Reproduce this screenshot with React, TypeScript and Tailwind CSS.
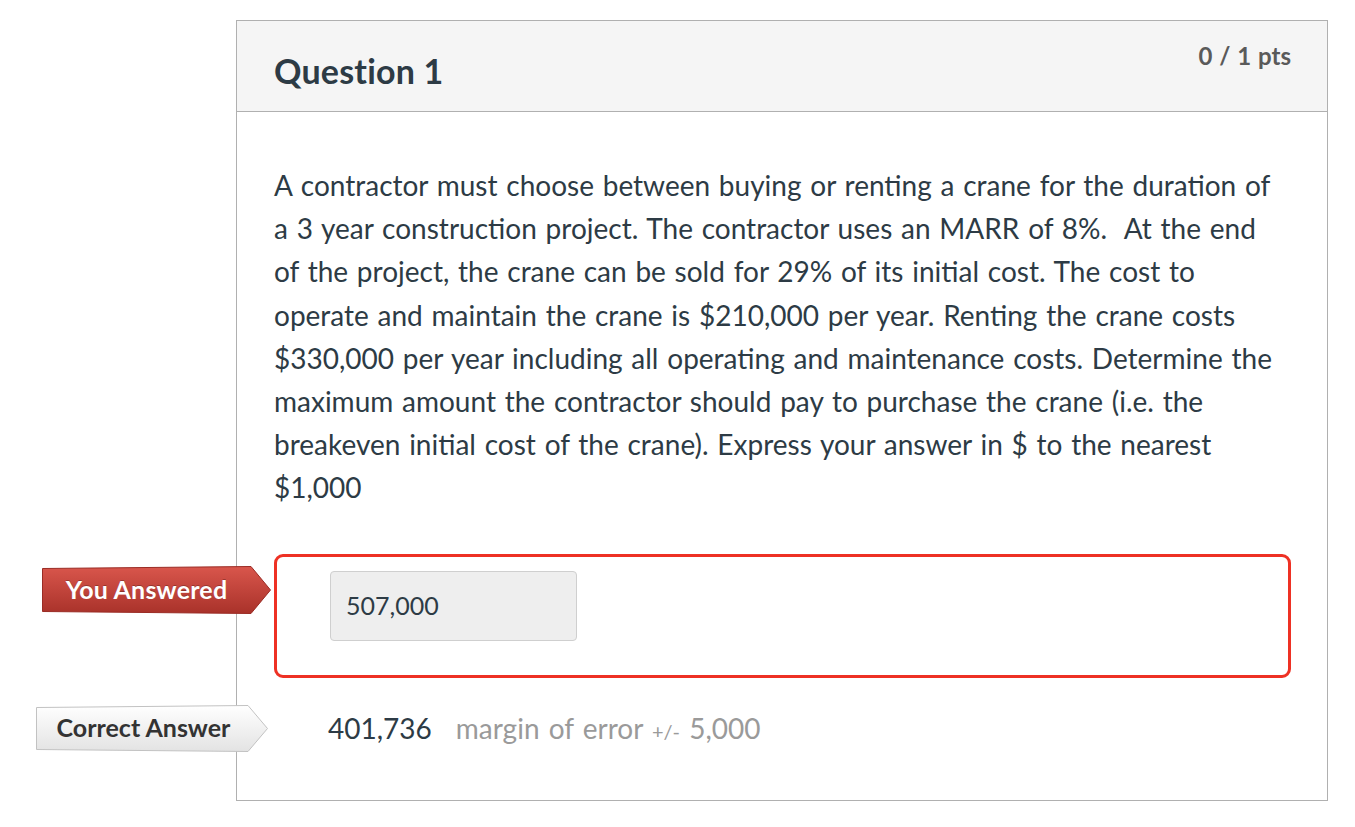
import React from "react";

function ArrowLabel({
  text,
  variant,
}: {
  text: string;
  variant: "red" | "gray";
}) {
  const red = variant === "red";
  const w = red ? 229 : 232;
  const h = red ? 48 : 47;
  const tip = 20;
  const id = red ? "gr" : "gg";
  return (
    <div className="relative" style={{ width: w, height: h }}>
      <svg width={w} height={h} className="absolute inset-0">
        <defs>
          <linearGradient id={id} x1="0" y1="0" x2="0" y2="1">
            {red ? (
              <>
                <stop offset="0" stopColor="#d9564c" />
                <stop offset="1" stopColor="#a9322a" />
              </>
            ) : (
              <>
                <stop offset="0" stopColor="#ffffff" />
                <stop offset="1" stopColor="#e3e3e3" />
              </>
            )}
          </linearGradient>
        </defs>
        <polygon
          points={`0.5,2.5 ${w - tip},0.5 ${w - 0.5},${h / 2} ${w - tip},${h - 0.5} 0.5,${h - 2.5}`}
          fill={`url(#${id})`}
          stroke={red ? "#9a2c25" : "#c2c2c2"}
          strokeWidth="1"
          strokeLinejoin="round"
        />
      </svg>
      <div
        className={`absolute inset-y-0 left-0 flex items-center justify-center font-bold text-[25px] ${
          red
            ? "text-white tracking-[0.2px] [text-shadow:0_-1px_0_rgba(0,0,0,0.25)]"
            : "text-[#333] tracking-[0px] pl-[3px]"
        }`}
        style={{ width: w - tip }}
      >
        {text}
      </div>
    </div>
  );
}

const lines = [
  "A contractor must choose between buying or renting a crane for the duration of",
  "a 3 year construction project. The contractor uses an MARR of 8%.\u00a0 At the end",
  "of the project, the crane can be sold for 29% of its initial cost. The cost to",
  "operate and maintain the crane is $210,000 per year. Renting the crane costs",
  "$330,000 per year including all operating and maintenance costs. Determine the",
  "maximum amount the contractor should pay to purchase the crane (i.e. the",
  "breakeven initial cost of the crane). Express your answer in $ to the nearest",
  "$1,000",
];

export default function App() {
  return (
    <div className="min-h-[827px] w-[1355px] bg-white font-['Lato','Noto_Sans',sans-serif] text-[#2d3b45] pt-[20px]">
      <div className="ml-[236px] w-[1092px] h-[781px] border border-[#b0b0b0] flex flex-col">
        <div className="h-[91px] shrink-0 bg-[#f5f5f5] border-b border-[#b0b0b0] flex justify-between pl-[37px] pr-[36px]">
          <div className="pt-[29px] text-[34px] leading-[42px] font-bold text-[#2d3b45] tracking-[0.2px]">
            Question 1
          </div>
          <div className="pt-[20px] text-[24px] leading-[30px] font-bold text-[#5a5a5a] [word-spacing:1px]">
            0 / 1 pts
          </div>
        </div>
        <div className="pt-[52px] px-[37px]">
          <p className="text-[28px] leading-[43.2px] [word-spacing:1.6px] text-[#2d3b45] w-[1040px]">
            {lines.map((l, i) => (
              <span key={i} className="block whitespace-nowrap">
                {l}
              </span>
            ))}
          </p>

          <div className="relative mt-[44px] w-[1017px] h-[124px] border-[3px] border-[#ee3124] rounded-[9px] pl-[53px] pt-[14px]">
            <div className="absolute left-[-235px] top-[9px]">
              <ArrowLabel text="You Answered" variant="red" />
            </div>
            <div className="w-[247px] h-[70px] bg-[#eeeeee] border border-[#cfcfcf] rounded-[4px] flex items-center pl-[15px] text-[25px] text-[#2d3b45]">
              507,000
            </div>
          </div>

          <div className="relative mt-[27px] h-[47px] flex items-center pl-[54px]">
            <div className="absolute left-[-238px] top-0">
              <ArrowLabel text="Correct Answer" variant="gray" />
            </div>
            <span className="text-[28px] text-[#2d3b45]">401,736</span>
            <span className="ml-[24px] text-[28px] text-[#9a9a9a] [word-spacing:2px]">
              margin of error <span className="text-[20px]">+/-</span> 5,000
            </span>
          </div>
        </div>
      </div>
    </div>
  );
}
